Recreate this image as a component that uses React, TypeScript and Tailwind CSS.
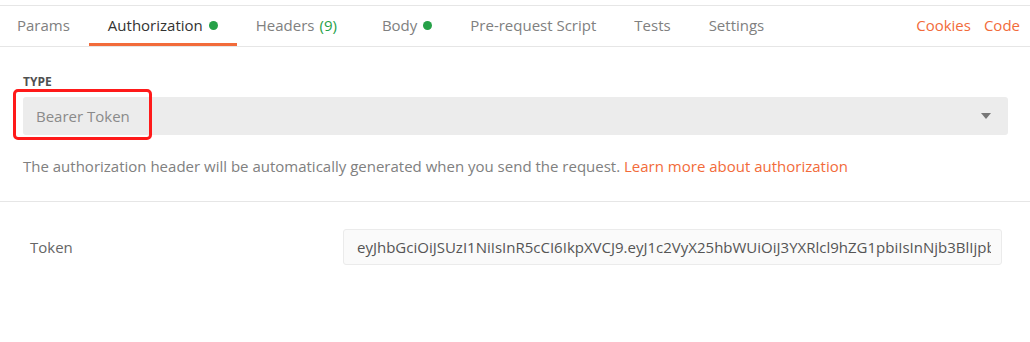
import React from "react";

const tabs = [
  { label: "Params" },
  { label: "Authorization", dot: true, active: true },
  { label: "Headers", count: "(9)" },
  { label: "Body", dot: true },
  { label: "Pre-request Script" },
  { label: "Tests" },
  { label: "Settings" },
];

export default function App() {
  return (
    <div
      className="w-[1030px] h-[342px] bg-white overflow-hidden text-[15px]"
      style={{ fontFamily: '"Open Sans", "Noto Sans", sans-serif' }}
    >
      <div className="h-[5px]" />
      <div className="flex items-stretch justify-between border-y border-[#e6e6e6] h-[42px]">
        <div className="flex items-stretch -ml-[2px]">
          {tabs.map((t) => (
            <div
              key={t.label}
              className={
                "relative flex items-center pl-[19px] pb-[1px] " +
                (t.count ? "pr-[26px] " : "pr-[19px] ") +
                (t.active ? "text-[#333333]" : "text-[#808080]")
              }
            >
              <span>{t.label}</span>
              {t.count && <span className="ml-[5px] text-[#26a148]">{t.count}</span>}
              {t.dot && <span className="ml-[6px] w-[9px] h-[9px] rounded-full bg-[#26a148]" />}
              {t.active && (
                <span className="absolute left-0 right-0 bottom-0 h-[3px] bg-[#f26b3a]" />
              )}
            </div>
          ))}
        </div>
        <div className="flex items-center gap-[13px] pr-[10px] pb-[1px] text-[#f26b3a]">
          <span>Cookies</span>
          <span>Code</span>
        </div>
      </div>

      <div className="pl-[23px] pr-[22px]">
        <div className="pt-[26px] text-[12px] font-bold text-[#505050] leading-[18px]">TYPE</div>
        <div className="relative mt-[6px]">
          <div className="h-[38px] rounded-[3px] bg-[#ececec] flex items-center justify-between pl-[13px] pr-[17px]">
            <span className="text-[#8a8a8a]">Bearer Token</span>
            <svg width="10" height="6" viewBox="0 0 10 6">
              <path d="M0 0 L10 0 L5 6 Z" fill="#777777" />
            </svg>
          </div>
          <div className="absolute left-[-10px] top-[-8px] w-[139px] h-[51px] border-[3px] border-[#ff1a1a] rounded-[5px]" />
        </div>
        <div className="mt-[20px] text-[#808080] leading-[22px]">
          The authorization header will be automatically generated when you send the request.{" "}
          <span className="text-[#f26b3a]">Learn more about authorization</span>
        </div>
      </div>

      <div className="mt-[24px] border-t border-[#e6e6e6]" />

      <div className="flex items-center pt-[27px]">
        <div className="pl-[30px] w-[343px] text-[#666666]">Token</div>
        <div className="w-[659px] h-[36px] rounded-[3px] border border-[#ebebeb] bg-[#fafafa] flex items-center pl-[13px] pr-[10px] overflow-hidden">
          <span className="whitespace-nowrap overflow-hidden text-[#555555]">
            eyJhbGciOiJSUzI1NiIsInR5cCI6IkpXVCJ9.eyJ1c2VyX25hbWUiOiJ3YXRlcl9hZG1pbiIsInNjb3BlIjpbImFsbCJdLCJleHAiOjE2MDA
          </span>
        </div>
      </div>
    </div>
  );
}
